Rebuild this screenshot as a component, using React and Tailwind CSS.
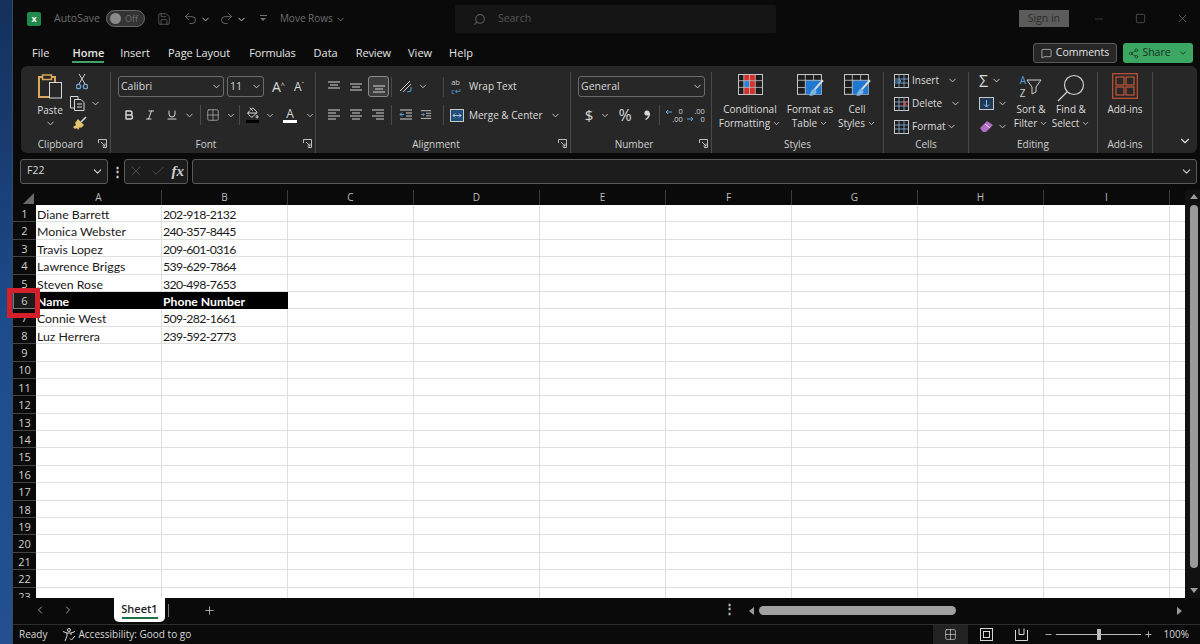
import { ChevronDown, ChevronLeft, ChevronRight, Search, Save, Undo2, Redo2, X, Check, Minus, Plus, Square, MessageSquare, Share2, Bold, Italic, Underline, Grid2x2, PaintBucket } from 'lucide-react';

const columns = ['A', 'B', 'C', 'D', 'E', 'F', 'G', 'H', 'I', ''];
const rowsData = {
  1: ['Diane Barrett', '202-918-2132'],
  2: ['Monica Webster', '240-357-8445'],
  3: ['Travis Lopez', '209-601-0316'],
  4: ['Lawrence Briggs', '539-629-7864'],
  5: ['Steven Rose', '320-498-7653'],
  6: ['Name', 'Phone Number'],
  7: ['Connie West', '509-282-1661'],
  8: ['Luz Herrera', '239-592-2773'],
};
const rowNums = Array.from({ length: 23 }, (_, i) => i + 1);

function Chev({ className = '' }) {
  return <ChevronDown className={`h-[11px] w-[11px] text-[#cfcfcf] ${className}`} strokeWidth={2} />;
}

function Launcher() {
  return (
    <svg width="9" height="9" viewBox="0 0 9 9" fill="none" stroke="#bdbdbd" strokeWidth="1">
      <path d="M.5 4V.5H8.500V8.500H5M3 3l4 4M7 4.500V7H4.500" />
    </svg>
  );
}

function Lines({ kind }) {
  const rows = {
    top: ['M1 2h12', 'M3 5h8', 'M1 8h12'],
    mid: ['M1 4h12', 'M3 7h8', 'M1 10h12'],
    bot: ['M1 6h12', 'M3 9h8', 'M1 12h12'],
    left: ['M1 2h12', 'M1 5h8', 'M1 8h12', 'M1 11h8'],
    center: ['M1 2h12', 'M3 5h8', 'M1 8h12', 'M3 11h8'],
    right: ['M1 2h12', 'M5 5h8', 'M1 8h12', 'M5 11h8'],
  }[kind];
  return (
    <svg width="14" height="14" viewBox="0 0 14 14" fill="none" stroke="#d4d4d4" strokeWidth="1">
      {rows.map((d) => <path key={d} d={d} />)}
    </svg>
  );
}

function Indent({ out }) {
  return (
    <svg width="14" height="14" viewBox="0 0 14 14" fill="none" stroke="#d4d4d4" strokeWidth="1">
      <path d="M1 2h12M7 5h6M7 8h6M1 11h12" />
      <path d={out ? 'M5 6.500H1M3 4.500l-2 2 2 2' : 'M1 6.500h4M3 4.500l2 2-2 2'} stroke="#5aa0dc" />
    </svg>
  );
}

function Group({ w, label, launcher, labelPad = '', children }) {
  return (
    <div className={`relative flex h-full shrink-0 flex-col border-r border-[#4a4a4a] ${w}`}>
      <div className="min-h-0 flex-1">{children}</div>
      <div className={`flex h-[19px] items-center justify-center pt-[1px] text-[10px] text-[#d0d0d0] ${labelPad}`}>{label}</div>
      {launcher && <div className="absolute bottom-[5px] right-[3px] flex"><Launcher /></div>}
    </div>
  );
}

function Combo({ w, text }) {
  return (
    <div className={`flex h-[21px] items-center justify-between rounded-[3px] border border-[#6a6a6a] pl-[2px] pr-[1px] text-[10.500px] text-[#d6d6d6] ${w}`}>
      <span>{text}</span>
      <Chev />
    </div>
  );
}

function Slot({ w, children }) {
  return <div className={`flex shrink-0 items-center justify-center ${w}`}>{children}</div>;
}

function Sep() {
  return <div className="h-[20px] w-px shrink-0 bg-[#4a4a4a]" />;
}

function BigButton({ w, icon, lines }) {
  return (
    <div className={`flex shrink-0 flex-col items-center ${w}`}>
      <div className="flex h-[30px] items-start justify-center pt-[2px]">{icon}</div>
      <div className="text-center text-[10px] leading-[14px] text-[#dcdcdc]">
        {lines.map((l, i) => (
          <div key={l} className="flex items-center justify-center whitespace-nowrap">
            {l}
            {i === lines.length - 1 && lines.length > 1 && <ChevronDown className="ml-[2px] h-[9px] w-[9px]" />}
          </div>
        ))}
      </div>
    </div>
  );
}

function TableIcon({ cond }) {
  if (cond) {
    return (
      <svg width="25" height="21" viewBox="0 0 26 22">
        <rect x=".5" y=".5" width="25" height="21" fill="#1c1c1c" stroke="#d0d0d0" />
        <rect x="6" y="1" width="12" height="6" fill="#d6302c" />
        <rect x="6" y="7" width="6" height="7" fill="#2f7fd0" />
        <rect x="12" y="7" width="6" height="7" fill="#d6302c" />
        <rect x="6" y="14" width="12" height="7" fill="#d6302c" />
        <path d="M6 0v22M12 0v22M18 0v22M0 7h26M0 14h26" stroke="#c8c8c8" strokeWidth=".8" />
      </svg>
    );
  }
  return (
    <svg width="27" height="25" viewBox="0 0 26 24">
      <rect x=".5" y=".5" width="23" height="19" fill="#1c1c1c" stroke="#c8c8c8" />
      <rect x="8" y="6" width="15.500" height="13.500" fill="#1f78d1" />
      <path d="M0 6h24M8 0v20M16 0v6M0 13h8" stroke="#c8c8c8" strokeWidth=".8" />
      <path d="M25 6L16 16" stroke="#d8d8d8" strokeWidth="2" />
      <path d="M17 14c-3 1-4 3-5 7 3 0 6-1 7-4z" fill="#7fb3e0" />
    </svg>
  );
}

function CellAction({ label, mark, chevMl }) {
  return (
    <div className="flex h-[23px] items-center pl-[10px] text-[10px] text-[#dcdcdc]">
      <svg width="15" height="14" viewBox="0 0 15 14" className="mr-[3px] shrink-0">
        <rect x=".5" y=".5" width="14" height="13" fill="#1c1c1c" stroke="#c8c8c8" />
        <path d="M0 5h15M0 9h15M5 0v14M10 0v14" stroke="#8db8e0" strokeWidth=".8" />
        {mark === 'x' && <path d="M9 4l4 5M13 4l-4 5" stroke="#e0504c" strokeWidth="1.200" />}
        {mark === 'in' && <path d="M1 7h6M5 5l2 2-2 2" stroke="#5aa0dc" strokeWidth="1" fill="none" />}
      </svg>
      <span>{label}</span>
      <Chev className={chevMl} />
    </div>
  );
}

function Ribbon() {
  return (
    <div className="mx-[8px] flex h-[87px] w-[1176px] rounded-[6px] bg-[#272727] pt-[6px]">
      <Group w="w-[90px]" label="Clipboard" launcher labelPad="pr-[10px]">
        <div className="flex h-full">
          <div className="ml-[12px] flex w-[34px] flex-col items-center">
            <svg width="26" height="27" viewBox="0 0 26 27" fill="none" className="mt-[1px]">
              <path d="M6 4H2v20h10M14 4h4v5" stroke="#d9a75e" strokeWidth="2" />
              <rect x="5.500" y="2" width="9" height="4.500" stroke="#d9a75e" strokeWidth="1.500" />
              <rect x="12.500" y="9.500" width="12" height="15.500" stroke="#d8d8d8" />
            </svg>
            <div className="mt-[3px] text-[10px] leading-[14px] text-[#dcdcdc]">Paste</div>
            <Chev className="mt-[1px]" />
          </div>
          <div className="ml-[3px] flex flex-col items-start pt-[1px]">
            <svg width="12" height="17" viewBox="0 0 12 17" fill="none" className="ml-[6px]">
              <path d="M3 1l6 10M9 1L3 11" stroke="#d0d0d0" />
              <circle cx="2.500" cy="13.500" r="2.200" stroke="#6f9fd0" strokeWidth="1.300" />
              <circle cx="9.500" cy="13.500" r="2.200" stroke="#6f9fd0" strokeWidth="1.300" />
            </svg>
            <div className="mt-[6px] flex items-center gap-[3px]">
              <svg width="15" height="15" viewBox="0 0 15 15" fill="none" stroke="#d8d8d8">
                <path d="M4 12H.500V.500H8V3" />
                <path d="M4.500 3.500H11l3 3v8H4.500zM7 8h5M7 11h5" />
              </svg>
              <Chev className="ml-[2px]" />
            </div>
            <svg width="15" height="15" viewBox="0 0 15 15" className="ml-[2px] mt-[5px]">
              <path d="M9 6l5-5" stroke="#d8d8d8" strokeWidth="1.600" />
              <path d="M6 3l6 6-3 3-1-1-2 3-1-2-2 1-2-2 3-2-1-2z" fill="#e3c26f" />
            </svg>
          </div>
        </div>
      </Group>

      <Group w="w-[205px]" label="Font" launcher labelPad="pr-[14px]">
        <div className="flex flex-col pl-[7px] pt-[4px]">
          <div className="flex items-center gap-[3px]">
            <Combo w="w-[106px]" text="Calibri" />
            <Combo w="w-[37px]" text="11" />
            <span className="ml-[5px] text-[14px] leading-none text-[#d8d8d8]">A<sup className="text-[7px]">^</sup></span>
            <span className="ml-[6px] text-[12px] leading-none text-[#d8d8d8]">A<sup className="text-[7px]">ˇ</sup></span>
          </div>
          <div className="mt-[6px] flex h-[24px] items-center">
            <Slot w="w-[21px]"><Bold className="h-[12px] w-[12px] text-[#d8d8d8]" strokeWidth={2.800} /></Slot>
            <Slot w="w-[22px]"><Italic className="h-[12px] w-[12px] text-[#d8d8d8]" /></Slot>
            <Slot w="w-[22px]"><Underline className="h-[12px] w-[12px] text-[#d8d8d8]" /></Slot>
            <Slot w="w-[13px]"><Chev /></Slot>
            <div className="w-[8px]" />
            <Sep />
            <Slot w="w-[25px]"><Grid2x2 className="h-[14px] w-[14px] text-[#d8d8d8]" strokeWidth={1} /></Slot>
            <Slot w="w-[10px]"><Chev /></Slot>
            <div className="w-[8px]" />
            <Sep />
            <Slot w="w-[25px]">
              <div className="flex flex-col items-center">
                <PaintBucket className="h-[12px] w-[12px] text-[#d8d8d8]" />
                <div className="mt-[1px] h-[3px] w-[13px] bg-black" />
              </div>
            </Slot>
            <Slot w="w-[10px]"><Chev /></Slot>
            <Slot w="w-[30px]">
              <div className="flex flex-col items-center text-[12px] leading-[12px] text-[#d8d8d8]">
                A
                <div className="h-[3px] w-[14px] bg-white" />
              </div>
            </Slot>
            <Slot w="w-[10px]"><Chev /></Slot>
          </div>
        </div>
      </Group>

      <Group w="w-[255px]" label="Alignment" launcher labelPad="pr-[14px]">
        <div className="flex h-full flex-col pl-[11px]">
          <div className="mt-[4px] flex h-[21px] items-center">
            <Slot w="w-[14px]"><Lines kind="top" /></Slot>
            <div className="w-[8px]" />
            <Slot w="w-[14px]"><Lines kind="mid" /></Slot>
            <div className="w-[5px]" />
            <Slot w="w-[21px]">
              <div className="flex h-[21px] w-[21px] items-center justify-center rounded-[3px] border border-[#8a8a8a] bg-[#3d3d3d]"><Lines kind="bot" /></div>
            </Slot>
            <div className="w-[2px]" />
            <Sep />
            <Slot w="w-[26px]">
              <svg width="15" height="15" viewBox="0 0 15 15" fill="none" stroke="#d0d0d0"><path d="M2 12L12 2M5 13l8-8" /><path d="M9 13l4-1 0-4" stroke="#5aa0dc" /></svg>
            </Slot>
            <Slot w="w-[10px]"><Chev /></Slot>
            <div className="w-[15px]" />
            <Sep />
            <Slot w="w-[25px]">
              <div className="flex flex-col text-[7.500px] leading-[9px] text-[#d0d0d0]">
                <span>ab</span>
                <span className="text-[#5aa0dc]">c↵</span>
              </div>
            </Slot>
            <span className="text-[10px] text-[#dcdcdc]">Wrap Text</span>
          </div>
          <div className="mt-[6px] flex h-[24px] items-center">
            <Slot w="w-[14px]"><Lines kind="left" /></Slot>
            <div className="w-[8px]" />
            <Slot w="w-[14px]"><Lines kind="center" /></Slot>
            <div className="w-[8px]" />
            <Slot w="w-[14px]"><Lines kind="right" /></Slot>
            <div className="w-[6px]" />
            <Sep />
            <Slot w="w-[28px]"><Indent out /></Slot>
            <Slot w="w-[12px]"><Indent /></Slot>
            <div className="w-[11px]" />
            <Sep />
            <Slot w="w-[25px]">
              <svg width="14" height="13" viewBox="0 0 14 13" fill="none"><rect x=".5" y=".5" width="13" height="12" fill="#1e4f7d" stroke="#c8c8c8" /><path d="M3 6.500h8M3 6.500l2-2M3 6.500l2 2M11 6.500l-2-2M11 6.500l-2 2" stroke="#e0e0e0" strokeWidth=".8" /></svg>
            </Slot>
            <span className="text-[10px] text-[#dcdcdc]">Merge &amp; Center</span>
            <Chev className="ml-[7px]" />
          </div>
        </div>
      </Group>

      <Group w="w-[141px]" label="Number" launcher labelPad="pr-[14px]">
        <div className="flex flex-col pl-[7px] pt-[4px]">
          <Combo w="w-[127px]" text="General" />
          <div className="mt-[6px] flex h-[24px] items-center text-[#d8d8d8]">
            <Slot w="w-[22px]"><span className="text-[15px]">$</span></Slot>
            <Slot w="w-[10px]"><Chev /></Slot>
            <Slot w="w-[30px]"><span className="text-[16px]">%</span></Slot>
            <Slot w="w-[14px]">
              <svg width="6" height="10" viewBox="0 0 6 10"><circle cx="3" cy="3" r="2.600" fill="#d8d8d8" /><path d="M5.600 3c0 3-1.500 5-4 6.500" stroke="#d8d8d8" strokeWidth="1.400" fill="none" /></svg>
            </Slot>
            <div className="w-[5px]" />
            <Sep />
            <Slot w="w-[28px]">
              <div className="flex items-center">
                <svg width="7" height="6" viewBox="0 0 7 6" fill="none" stroke="#5aa0dc" className="-mt-[7px]"><path d="M7 3H1M3 1L1 3l2 2" /></svg>
                <div className="flex flex-col items-end text-[7.500px] leading-[8px] text-[#cfcfcf]">
                  <span>0</span>
                  <span>.00</span>
                </div>
              </div>
            </Slot>
            <Slot w="w-[16px]">
              <div className="flex items-center">
                <svg width="7" height="6" viewBox="0 0 7 6" fill="none" stroke="#5aa0dc" className="mt-[7px]"><path d="M0 3h6M4 1l2 2-2 2" /></svg>
                <div className="flex flex-col items-end text-[7.500px] leading-[8px] text-[#cfcfcf]">
                  <span>.00</span>
                  <span>0</span>
                </div>
              </div>
            </Slot>
          </div>
        </div>
      </Group>

      <Group w="w-[172px]" label="Styles">
        <div className="flex">
          <BigButton w="w-[76px]" icon={<TableIcon cond />} lines={['Conditional', 'Formatting']} />
          <BigButton w="w-[44px]" icon={<TableIcon />} lines={['Format as', 'Table']} />
          <BigButton w="w-[50px]" icon={<TableIcon />} lines={['Cell', 'Styles']} />
        </div>
      </Group>

      <Group w="w-[85px]" label="Cells">
        <div className="-mt-[3px] flex flex-col">
          <CellAction label="Insert" mark="in" chevMl="ml-[8px]" />
          <CellAction label="Delete" mark="x" chevMl="ml-[8px]" />
          <CellAction label="Format" chevMl="" />
        </div>
      </Group>

      <Group w="w-[129px]" label="Editing">
        <div className="flex">
          <div className="-mt-[3px] flex w-[44px] flex-col pl-[10px]">
            <div className="flex h-[23px] items-center gap-[3px]"><span className="text-[16px] leading-none text-[#d8d8d8]">Σ</span><Chev /></div>
            <div className="flex h-[23px] items-center gap-[3px]">
              <svg width="15" height="13" viewBox="0 0 15 13" fill="none"><rect x=".5" y=".5" width="14" height="12" fill="#1e3a55" stroke="#c8c8c8" /><path d="M7.500 3v7M5 7.500l2.500 2.500L10 7.500" stroke="#8fc0ea" /></svg>
              <Chev />
            </div>
            <div className="flex h-[23px] items-center gap-[3px]">
              <svg width="15" height="13" viewBox="0 0 15 13"><path d="M1 8l7-7 6 4-7 7H4z" fill="#b16cc4" /><path d="M6 4l5 4" stroke="#f0d8f5" /></svg>
              <Chev />
            </div>
          </div>
          <BigButton
            w="w-[36px]"
            icon={
              <div className="flex items-center">
                <div className="flex flex-col text-[10px] leading-[13px]">
                  <span className="text-[#5aa0dc]">A</span>
                  <span className="text-[#d0d0d0]">Z</span>
                </div>
                <svg width="16" height="16" viewBox="0 0 16 16" fill="none"><path d="M1 1h14l-5 7v5l-4 2V8z" stroke="#d0d0d0" /></svg>
              </div>
            }
            lines={['Sort &', 'Filter']}
          />
          <BigButton
            w="w-[44px]"
            icon={
              <svg width="28" height="28" viewBox="0 0 28 28" fill="none" stroke="#d0d0d0" strokeWidth="1.200"><circle cx="17" cy="11" r="9.500" /><path d="M10 18L1 27" /></svg>
            }
            lines={['Find &', 'Select']}
          />
        </div>
      </Group>

      <Group w="w-[55px]" label="Add-ins">
        <BigButton
          w="w-full"
          icon={
            <svg width="26" height="26" viewBox="0 0 26 26" fill="none" stroke="#c4553a" strokeWidth="1.200" className="-mt-[1px]">
              <rect x=".7" y=".7" width="24.600" height="24.600" />
              <rect x="4" y="4" width="8" height="8" />
              <rect x="14" y="4" width="8" height="8" />
              <rect x="4" y="14" width="8" height="8" />
              <rect x="14" y="14" width="8" height="8" />
            </svg>
          }
          lines={['Add-ins']}
        />
      </Group>

      <div className="flex flex-1 items-end justify-end pb-[5px] pr-[5px]">
        <ChevronDown className="h-[14px] w-[14px] text-[#dcdcdc]" />
      </div>
    </div>
  );
}

function Sheet() {
  return (
    <div className="flex h-[408px] min-h-0">
      <div className="h-full min-w-0 flex-1 overflow-hidden">
        <div className="flex h-[15px]">
          <div className="flex w-[23px] shrink-0 items-end justify-end pb-[1px] pr-[2px]">
            <div className="h-0 w-0 border-b-[11px] border-l-[11px] border-b-[#6a6a6a] border-l-transparent" />
          </div>
          {columns.map((c, i) => (
            <div key={i} className="flex w-[126px] shrink-0 items-center justify-center border-r border-[#3a3a3a] text-[10px] text-[#bcbcbc]">{c}</div>
          ))}
        </div>
        {rowNums.map((n) => {
          const row = rowsData[n];
          const head = n === 6;
          return (
            <div key={n} className="flex h-[17.400px]">
              <div className={`flex w-[23px] shrink-0 items-center justify-center border-b pt-[2px] text-[11px] text-[#cfcfcf] ${head ? 'border border-[#777] bg-[#1a1a1a]' : 'border-[#444]'}`}>{n}</div>
              {columns.map((c, i) => {
                const blackCell = head && i < 2;
                const phone = !head && i === 1;
                return (
                  <div
                    key={i}
                    className={`w-[126px] shrink-0 overflow-hidden whitespace-nowrap border-b border-r pl-[1px] font-['Lato',sans-serif] leading-[19px] ${blackCell ? 'border-black bg-black text-[12.200px] font-bold text-white' : 'border-[#dfdfdf] bg-white text-[12.300px] text-[#1a1a1a]'} ${phone ? 'tracking-[-0.65px]' : ''}`}
                  >
                    {row && i < 2 ? row[i] : ''}
                  </div>
                );
              })}
            </div>
          );
        })}
      </div>
      <div className="flex w-[15px] shrink-0 flex-col items-center bg-[#111] pl-[2px]">
        <div className="mt-[4px] h-0 w-0 border-x-[4px] border-b-[5px] border-x-transparent border-b-[#9a9a9a]" />
        <div className="mt-[6px] h-[363px] w-[8px] rounded-full bg-[#9a9a9a]" />
        <div className="mt-[20px] h-0 w-0 border-x-[4px] border-t-[5px] border-x-transparent border-t-[#9a9a9a]" />
      </div>
    </div>
  );
}

export default function App() {
  return (
    <div className="relative flex h-[644px] w-[1200px] overflow-hidden bg-[#0a0a0a] font-['Open_Sans',sans-serif]">
      <div className="h-full w-[12px] shrink-0 bg-gradient-to-b from-[#14305c] via-[#1d4c8c] to-[#24508f]" />
      <div className="flex min-w-0 flex-1 flex-col border-l border-[#3a4a5a]">
        {/* title bar */}
        <div className="flex h-[40px] shrink-0 items-start">
          <div className="ml-[14px] mt-[12px] flex h-[14px] w-[14px] items-center justify-center rounded-[2px] bg-[#1f8a4c] text-[9px] font-bold text-white">x</div>
          <span className="ml-[13px] mt-[11px] text-[10.500px] text-[#6e6e6e]">AutoSave</span>
          <div className="ml-[6px] mt-[10px] flex h-[17px] w-[39px] items-center rounded-full border border-[#6a6a6a] bg-[#333] pl-[3px]">
            <div className="h-[11px] w-[11px] rounded-full bg-[#8a8a8a]" />
            <span className="ml-[4px] text-[9px] text-[#6e6e6e]">Off</span>
          </div>
          <Save className="ml-[12px] mt-[12px] h-[14px] w-[14px] text-[#6e6e6e]" strokeWidth={1.200} />
          <Undo2 className="ml-[12px] mt-[11px] h-[15px] w-[15px] text-[#6e6e6e]" strokeWidth={1.400} />
          <Chev className="ml-[2px] mt-[14px] text-[#6e6e6e]" />
          <Redo2 className="ml-[8px] mt-[11px] h-[15px] w-[15px] text-[#6e6e6e]" strokeWidth={1.400} />
          <Chev className="ml-[2px] mt-[14px] text-[#6e6e6e]" />
          <div className="ml-[13px] mt-[15px] flex flex-col items-center gap-[2px]">
            <div className="h-px w-[7px] bg-[#6e6e6e]" />
            <div className="h-0 w-0 border-x-[3px] border-t-[3px] border-x-transparent border-t-[#6e6e6e]" />
          </div>
          <span className="ml-[13px] mt-[11px] w-[54px] shrink-0 whitespace-nowrap text-[10px] text-[#6e6e6e]">Move Rows</span>
          <ChevronDown className="ml-[1px] mt-[14px] h-[11px] w-[11px] shrink-0 text-[#6e6e6e]" />
          <div className="ml-[109px] mt-[5px] flex h-[28px] w-[321px] shrink-0 items-center rounded-[2px] bg-[#151515] pl-[18px]">
            <Search className="h-[13px] w-[13px] -scale-x-100 text-[#5a5a5a]" />
            <span className="ml-[12px] text-[10.500px] text-[#565656]">Search</span>
          </div>
          <div className="ml-[243px] mt-[10px] flex h-[17px] w-[50px] shrink-0 items-center justify-center bg-[#5c5c5c] text-[10.500px] text-[#2c2c2c]">Sign in</div>
          <Minus className="ml-[24px] mt-[13px] h-[12px] w-[12px] text-[#555]" strokeWidth={1.200} />
          <Square className="ml-[30px] mt-[13px] h-[11px] w-[11px] text-[#666]" strokeWidth={1.400} />
          <X className="ml-[30px] mt-[12px] h-[13px] w-[13px] text-[#666]" strokeWidth={1.400} />
        </div>

        {/* tabs */}
        <div className="flex h-[26px] shrink-0 items-start pl-[19px] text-[11px] text-[#e4e4e4]">
          <span className="mt-[5px]">File</span>
          <span className="ml-[23px] mt-[5px] border-b-2 border-[#3fa46a] pb-[1px] font-semibold leading-[15px]">Home</span>
          <span className="ml-[16px] mt-[5px]">Insert</span>
          <span className="ml-[18px] mt-[5px]">Page Layout</span>
          <span className="ml-[19px] mt-[5px] tracking-[-0.2px]">Formulas</span>
          <span className="ml-[18px] mt-[5px]">Data</span>
          <span className="ml-[18px] mt-[5px] tracking-[-0.1px]">Review</span>
          <span className="ml-[17px] mt-[5px]">View</span>
          <span className="ml-[17px] mt-[5px]">Help</span>
          <div className="ml-auto mr-[7px] flex items-start gap-[6px]">
            <div className="mt-[3px] flex h-[20px] w-[84px] items-center justify-center gap-[4px] rounded-[3px] border border-[#5a5a5a] bg-[#272727] text-[10.500px]">
              <MessageSquare className="h-[11px] w-[11px]" strokeWidth={1.400} />
              Comments
            </div>
            <div className="mt-[3px] flex h-[20px] w-[70px] items-center justify-center gap-[3px] rounded-[3px] bg-[#3ca663] text-[10.500px] text-[#16321f]">
              <Share2 className="h-[11px] w-[11px]" strokeWidth={1.400} />
              Share
              <ChevronDown className="ml-[4px] h-[10px] w-[10px]" />
            </div>
          </div>
        </div>

        <Ribbon />

        {/* formula bar */}
        <div className="mt-[5px] flex h-[26px] shrink-0 items-center pl-[7px] pr-[3px]">
          <div className="flex h-[25px] w-[88px] items-center justify-between rounded-[3px] border border-[#5a5a5a] bg-[#1c1c1c] pl-[6px] pr-[3px] text-[10.500px] text-[#d6d6d6]">
            F22
            <ChevronDown className="h-[13px] w-[13px]" />
          </div>
          <span className="mx-[3px] w-[10px] text-center text-[13px] font-bold leading-none text-[#cfcfcf]">⋮</span>
          <div className="flex h-[25px] w-[64px] items-center justify-between rounded-[3px] border border-[#5a5a5a] bg-[#1c1c1c] px-[3px]">
            <X className="h-[16px] w-[16px] text-[#5a5a5a]" strokeWidth={1.200} />
            <Check className="h-[16px] w-[16px] text-[#5a5a5a]" strokeWidth={1.200} />
            <span className="font-['Liberation_Serif',serif] text-[15px] font-bold italic text-[#cfcfcf]">fx</span>
          </div>
          <div className="ml-[4px] flex h-[25px] flex-1 items-center justify-end rounded-[3px] border border-[#5a5a5a] bg-[#1c1c1c] pr-[3px]">
            <ChevronDown className="h-[13px] w-[13px] text-[#cfcfcf]" />
          </div>
        </div>

        <div className="h-[6px] shrink-0" />
        <Sheet />

        {/* sheet tabs */}
        <div className="flex h-[26px] shrink-0 items-start">
          <ChevronLeft className="ml-[21px] mt-[6px] h-[12px] w-[12px] text-[#9a9a9a]" />
          <ChevronRight className="ml-[16px] mt-[6px] h-[12px] w-[12px] text-[#9a9a9a]" />
          <div className="ml-[40px] flex h-[24px] w-[51px] flex-col items-center rounded-b-[5px] bg-white pt-[4px] text-[11px] font-semibold leading-[14px] text-[#222]">
            Sheet1
            <div className="mt-[1px] h-[2px] w-[36px] bg-[#1e7145]" />
          </div>
          <div className="ml-[3px] mt-[6px] h-[13px] w-px bg-[#777]" />
          <Plus className="ml-[34px] mt-[6px] h-[13px] w-[13px] text-[#cfcfcf]" strokeWidth={1.400} />
          <span className="ml-[507px] mt-[2px] text-[13px] font-bold leading-[16px] text-[#bdbdbd]">⋮</span>
          <div className="ml-[13px] mt-[9px] h-0 w-0 border-y-[4px] border-r-[5px] border-y-transparent border-r-[#9a9a9a]" />
          <div className="ml-[5px] mt-[8px] h-[9px] w-[197px] rounded-full bg-[#a0a0a0]" />
          <div className="ml-[221px] mt-[9px] h-0 w-0 border-y-[4px] border-l-[5px] border-y-transparent border-l-[#9a9a9a]" />
        </div>

        {/* status bar */}
        <div className="flex h-[20px] shrink-0 items-center border-t border-[#2e2e2e] text-[10px] text-[#d8d8d8]">
          <span className="ml-[6px]">Ready</span>
          <svg width="15" height="14" viewBox="0 0 15 14" fill="none" stroke="#d8d8d8" className="ml-[15px] mr-[1px]">
            <circle cx="7" cy="2" r="1.500" />
            <path d="M1 3.500l4 1.500h4l4-1.500M5 5v3l-2 5M9 5v2M8 10.500l1.500 1.500L13 8" />
          </svg>
          <span>Accessibility: Good to go</span>
          <div className="ml-auto flex h-full w-[35px] items-center justify-center bg-[#222]">
            <Grid2x2 className="h-[13px] w-[13px]" strokeWidth={1.200} />
          </div>
          <div className="ml-[1px] flex w-[35px] justify-center">
            <svg width="13" height="13" viewBox="0 0 13 13" fill="none" stroke="#d8d8d8"><rect x=".5" y=".5" width="12" height="12" /><rect x="3.500" y="3.500" width="6" height="6" /></svg>
          </div>
          <div className="flex w-[35px] justify-center">
            <svg width="13" height="13" viewBox="0 0 13 13" fill="none" stroke="#d8d8d8"><path d="M.5 2v10.500h12V2M4 .5v6h5v-6" /></svg>
          </div>
          <Minus className="ml-[5px] h-[9px] w-[9px]" />
          <div className="relative mx-[3px] flex h-[12px] w-[85px] items-center">
            <div className="h-px w-full bg-[#bbb]" />
            <div className="absolute left-[41px] h-[11px] w-[4px] bg-[#bdbdbd]" />
          </div>
          <Plus className="h-[9px] w-[9px]" />
          <span className="ml-[11px] mr-[11px]">100%</span>
        </div>
      </div>

      {/* red highlight around row 6 */}
      <div className="absolute left-[7px] top-[288px] h-[30px] w-[33px] border-[5px] border-[#d4202a]" />
    </div>
  );
}
